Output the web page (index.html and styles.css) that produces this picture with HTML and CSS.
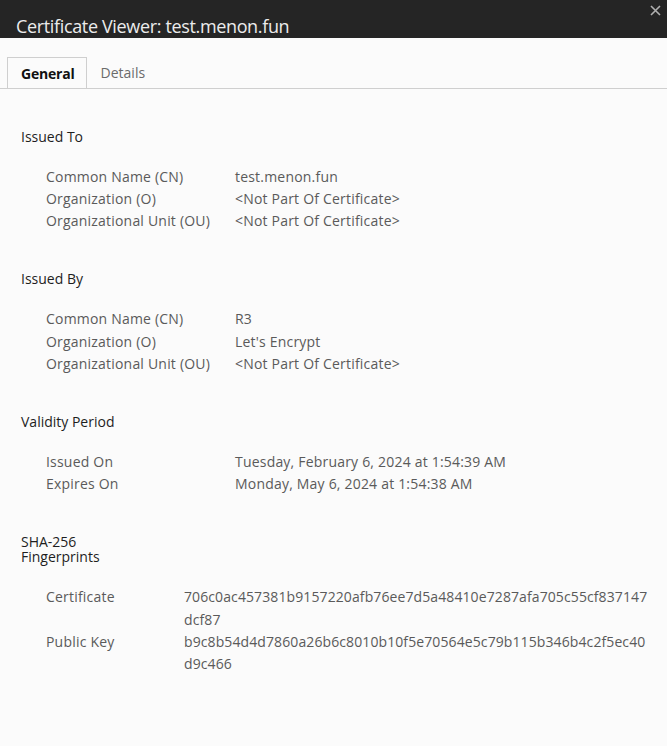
FILE: index.html
```html
<!DOCTYPE html>
<html>
<head>
<meta charset="utf-8">
<link rel="stylesheet" href="styles.css">
</head>
<body>
<div class="dialog">
  <header class="titlebar">
    <span class="title">Certificate Viewer: test.menon.fun</span>
    <svg class="close" width="11" height="11" viewBox="0 0 11 11"><path d="M1 1L10 10M10 1L1 10" stroke="#b0b0b0" stroke-width="1.6" fill="none"/></svg>
  </header>
  <nav class="tabs">
    <div class="tab active">General</div>
    <div class="tab">Details</div>
  </nav>
  <main class="content">
    <section class="section">
      <h2 class="heading">Issued To</h2>
      <div class="rows">
        <div class="label">Common Name (CN)</div><div class="value">test.menon.fun</div>
        <div class="label">Organization (O)</div><div class="value">&lt;Not Part Of Certificate&gt;</div>
        <div class="label">Organizational Unit (OU)</div><div class="value">&lt;Not Part Of Certificate&gt;</div>
      </div>
    </section>
    <section class="section">
      <h2 class="heading">Issued By</h2>
      <div class="rows">
        <div class="label">Common Name (CN)</div><div class="value">R3</div>
        <div class="label">Organization (O)</div><div class="value">Let's Encrypt</div>
        <div class="label">Organizational Unit (OU)</div><div class="value">&lt;Not Part Of Certificate&gt;</div>
      </div>
    </section>
    <section class="section">
      <h2 class="heading">Validity Period</h2>
      <div class="rows">
        <div class="label">Issued On</div><div class="value">Tuesday, February 6, 2024 at 1:54:39 AM</div>
        <div class="label">Expires On</div><div class="value">Monday, May 6, 2024 at 1:54:38 AM</div>
      </div>
    </section>
    <section class="section">
      <h2 class="heading narrow">SHA-256 Fingerprints</h2>
      <div class="rows fp">
        <div class="label">Certificate</div><div class="value hash">706c0ac457381b9157220afb76ee7d5a48410e7287afa705c55cf837147dcf87</div>
        <div class="label">Public Key</div><div class="value hash">b9c8b54d4d7860a26b6c8010b10f5e70564e5c79b115b346b4c2f5ec40d9c466</div>
      </div>
    </section>
  </main>
</div>
</body>
</html>
```
FILE: styles.css
```css
html, body {
  margin: 0;
  padding: 0;
  background: #fbfbfb;
}
body {
  font-family: "Open Sans", "Noto Sans", sans-serif;
  font-size: 14px;
  width: 667px;
  height: 746px;
  overflow: hidden;
}
.dialog {
  display: flex;
  flex-direction: column;
}
.titlebar {
  height: 38px;
  background: #252525;
  display: flex;
  align-items: flex-end;
  justify-content: space-between;
  position: relative;
  padding: 0 0 0 16px;
  box-sizing: border-box;
}
.title {
  color: #ececec;
  font-size: 18px;
  line-height: 24px;
  margin-bottom: 0;
  letter-spacing: -0.35px;
}
.close {
  position: absolute;
  right: 6px;
  top: 5px;
}
.tabs {
  display: flex;
  padding: 19px 0 0 7px;
  border-bottom: 1px solid #cfcfcf;
}
.tab {
  height: 31px;
  line-height: 32px;
  padding: 0 14px;
  color: #6b6b6b;
  box-sizing: border-box;
}
.tab.active {
  border: 1px solid #cfcfcf;
  border-bottom: none;
  font-weight: bold;
  color: #111;
  padding: 0 11px 0 13px;
  letter-spacing: -0.2px;
}
.content {
  padding: 39.5px 0 0 21px;
}
.section {
  margin-bottom: 38.5px;
}
.heading {
  margin: 0 0 22px 0;
  font-size: 14px;
  font-weight: normal;
  line-height: 15px;
  color: #1e1e1e;
}
.heading.narrow {
  max-width: 100px;
}
.rows {
  display: grid;
  grid-template-columns: 189px auto;
  padding-left: 25px;
  line-height: 22.4px;
  color: #5a5a5a;
  letter-spacing: 0.2px;
}
.rows.fp {
  grid-template-columns: 138px 465px;
}
.value.hash {
  word-break: break-all;
  letter-spacing: 0.1px;
}
```
